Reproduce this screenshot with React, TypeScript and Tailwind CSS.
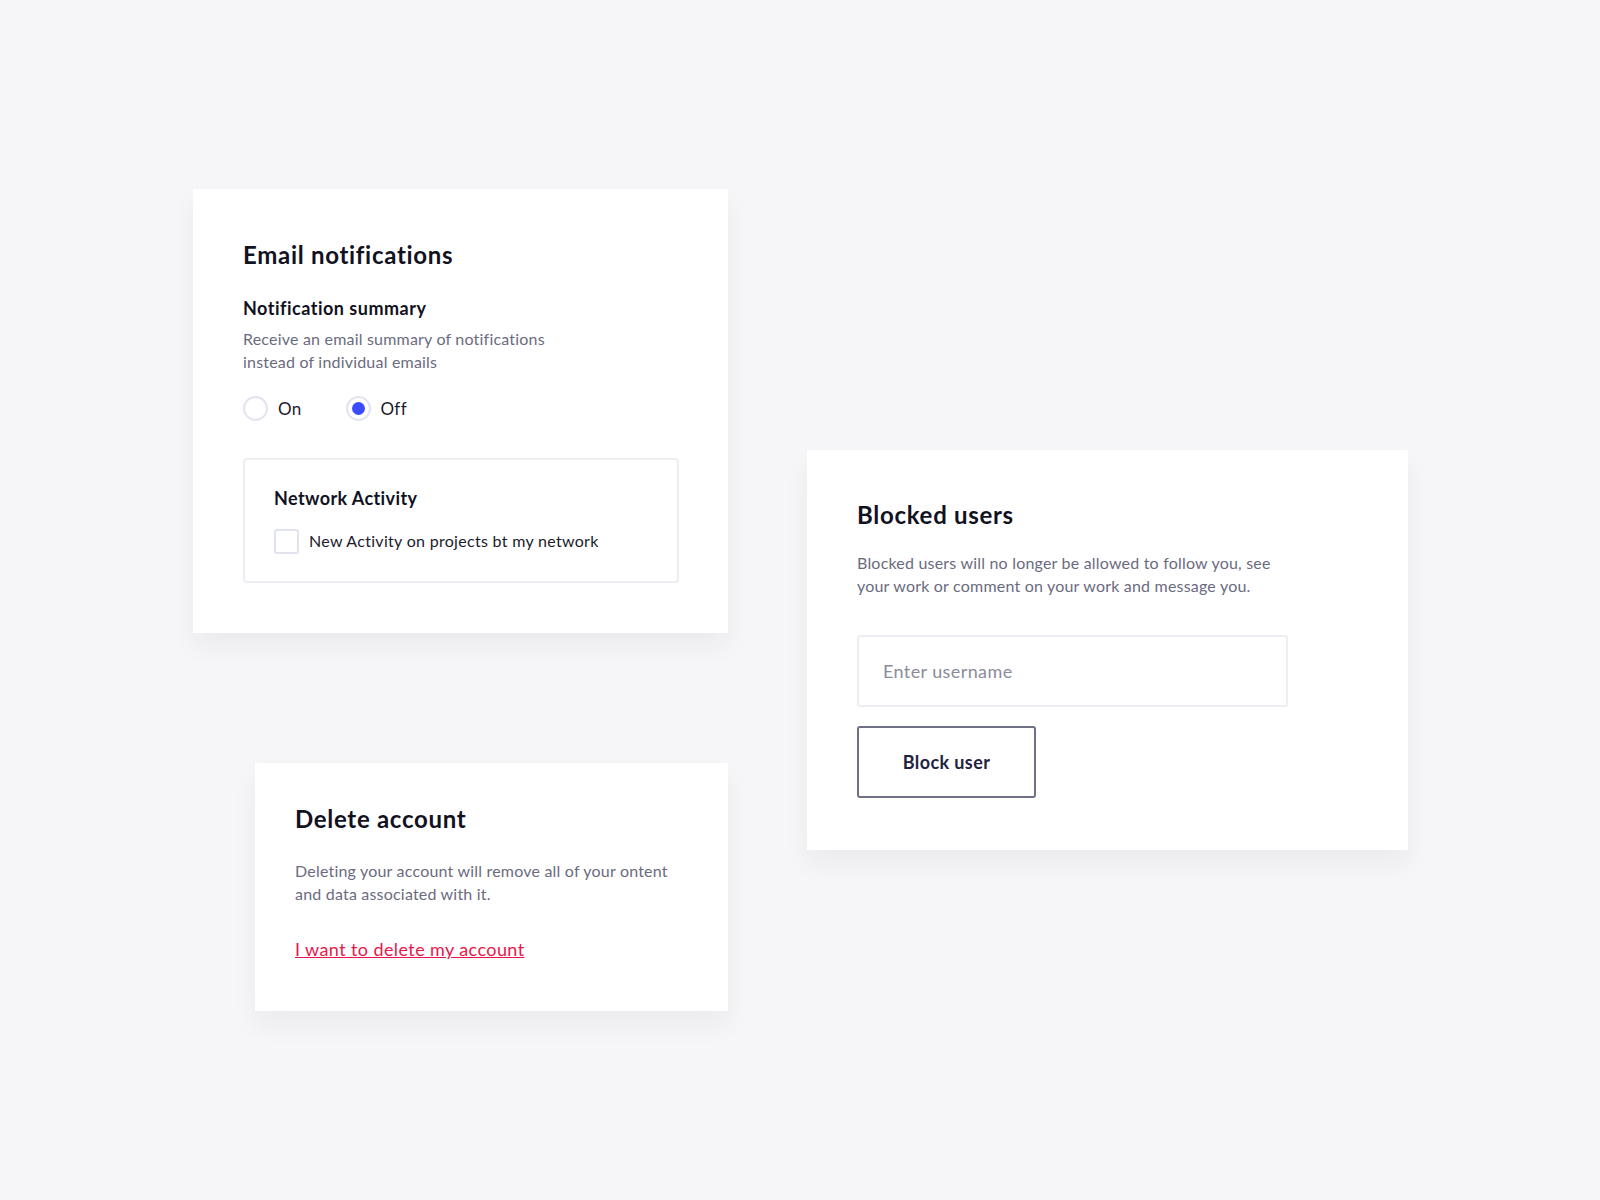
import { useState } from "react";

const font = { fontFamily: "Lato, 'Noto Sans', sans-serif" };

function Radio({ label, checked, onClick }: { label: string; checked: boolean; onClick: () => void }) {
  return (
    <button type="button" onClick={onClick} className="flex items-center gap-[10px]">
      <span className="flex h-[25px] w-[25px] items-center justify-center rounded-full border-2 border-[#e1e4ef] bg-white">
        {checked && <span className="h-[13px] w-[13px] rounded-full bg-[#3b4cff]" />}
      </span>
      <span className="text-[17px] tracking-[0.3px] text-[#1b1b2b]">{label}</span>
    </button>
  );
}

export default function App() {
  const [summary, setSummary] = useState<"on" | "off">("off");
  const [network, setNetwork] = useState(false);
  const [username, setUsername] = useState("");

  return (
    <div style={font} className="min-h-screen bg-[#f6f6f8] pl-[193px] pt-[189px]">
      <div className="flex gap-[79px]">
        {/* left column */}
        <div className="flex w-[535px] flex-col items-end gap-[130px]">
          <div className="h-[444px] w-[535px] bg-white px-[50px] pt-[50px] shadow-[0_14px_24px_rgba(30,30,60,0.05)]">
            <h2 className="text-[24px] font-bold leading-[32px] tracking-[0.7px] text-[#12121f]">Email notifications</h2>
            <h3 className="mt-[25px] text-[18px] font-bold leading-[24px] tracking-[0.5px] text-[#12121f]">
              Notification summary
            </h3>
            <p className="mt-[7px] w-[330px] text-[16px] leading-[23px] tracking-[0.2px] text-[#6b6b80]">
              Receive an email summary of notifications instead of individual emails
            </p>
            <div className="mt-[23px] flex gap-[44px]">
              <Radio label="On" checked={summary === "on"} onClick={() => setSummary("on")} />
              <Radio label="Off" checked={summary === "off"} onClick={() => setSummary("off")} />
            </div>
            <div className="mt-[36px] h-[125px] w-[436px] rounded-[4px] border-2 border-[#eceef4] px-[29px] pt-[26px]">
              <h4 className="text-[18px] font-bold leading-[24px] tracking-[0.4px] text-[#12121f]">Network Activity</h4>
              <label className="mt-[19px] flex items-center gap-[10px]">
                <button
                  type="button"
                  onClick={() => setNetwork(!network)}
                  className="h-[25px] w-[25px] rounded-[3px] border-2 border-[#e1e4ef] bg-white"
                />
                <span className="text-[16px] tracking-[0.3px] text-[#1b1b2b]">New Activity on projects bt my network</span>
              </label>
            </div>
          </div>

          <div className="h-[248px] w-[473px] bg-white px-[40px] pt-[40px] shadow-[0_14px_24px_rgba(30,30,60,0.05)]">
            <h2 className="text-[24px] font-bold leading-[32px] tracking-[0.7px] text-[#12121f]">Delete account</h2>
            <p className="mt-[24px] w-[395px] text-[16px] leading-[23px] tracking-[0.2px] text-[#6b6b80]">
              Deleting your account will remove all of your ontent and data associated with it.
            </p>
            <a href="#" className="mt-[32px] block w-fit text-[18px] leading-[24px] tracking-[0.4px] text-[#e8174a] underline">
              I want to delete my account
            </a>
          </div>
        </div>

        {/* right column */}
        <div className="mt-[261px]">
          <div className="h-[400px] w-[601px] bg-white px-[50px] pt-[49px] shadow-[0_14px_24px_rgba(30,30,60,0.05)]">
            <h2 className="text-[24px] font-bold leading-[32px] tracking-[0.7px] text-[#12121f]">Blocked users</h2>
            <p className="mt-[20px] w-[440px] text-[16px] leading-[23px] tracking-[0.2px] text-[#6b6b80]">
              Blocked users will no longer be allowed to follow you, see your work or comment on your work and message you.
            </p>
            <input
              value={username}
              onChange={(e) => setUsername(e.target.value)}
              placeholder="Enter username"
              className="mt-[38px] block h-[72px] w-[431px] rounded-[3px] border-2 border-[#eceef4] px-[24px] text-[18px] tracking-[0.4px] text-[#1b1b2b] outline-none placeholder:text-[#8a8b9c]"
            />
            <button
              type="button"
              className="mt-[19px] h-[72px] w-[179px] rounded-[3px] border-2 border-[#6e7184] text-[18px] font-bold tracking-[0.4px] text-[#1f2340]"
            >
              Block user
            </button>
          </div>
        </div>
      </div>
    </div>
  );
}
